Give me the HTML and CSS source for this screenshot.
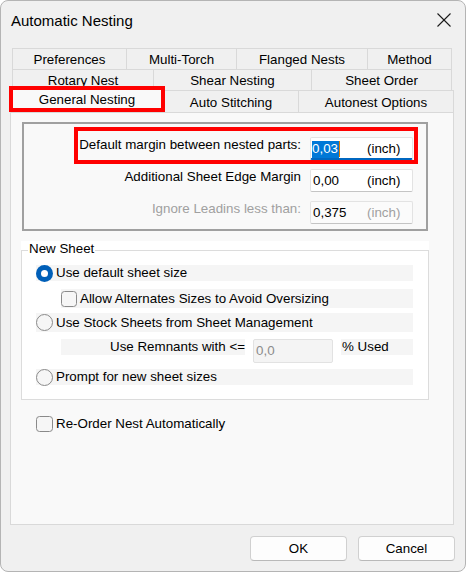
FILE: index.html
```html
<!DOCTYPE html>
<html lang="en">
<head>
    <meta charset="UTF-8">
    <title>Automatic Nesting</title>
    <link rel="stylesheet" href="styles.css">
</head>
<body>
    <div class="window">
        <!-- Title bar -->
        <div class="titlebar">
            <div class="title">Automatic Nesting</div>
            <svg class="close" viewBox="0 0 14 14">
                <line x1="0.5" y1="0.5" x2="13.5" y2="13.5" />
                <line x1="13.5" y1="0.5" x2="0.5" y2="13.5" />
            </svg>
        </div>

        <!-- Tabs -->
        <div class="tabs">
            <div class="tab-row">
                <div class="tab" style="width: 114px">Preferences</div>
                <div class="tab" style="width: 110px">Multi-Torch</div>
                <div class="tab" style="width: 131px">Flanged Nests</div>
                <div class="tab" style="width: 85px">Method</div>
            </div>
            <div class="tab-row">
                <div class="tab" style="width: 141px">Rotary Nest</div>
                <div class="tab" style="width: 158px">Shear Nesting</div>
                <div class="tab" style="width: 141px">Sheet Order</div>
            </div>
            <div class="tab-row front">
                <div class="tab selected" style="width: 153px">General Nesting</div>
                <div class="tab" style="width: 135px">Auto Stitching</div>
                <div class="tab" style="width: 156px">Autonest Options</div>
            </div>
        </div>
        <div class="mark tab-mark"></div>

        <!-- Tab page -->
        <div class="panel">
            <div class="margins">
                <div class="mark field-mark"></div>
                <div class="field-row">
                    <div class="field-label">Default margin between nested parts:</div>
                    <div class="edit focused">
                        <span class="val"><span class="sel">0,03</span><span class="caret"></span></span>
                        <span class="unit">(inch)</span>
                    </div>
                </div>
                <div class="field-row">
                    <div class="field-label">Additional Sheet Edge Margin</div>
                    <div class="edit">
                        <span class="val">0,00</span>
                        <span class="unit">(inch)</span>
                    </div>
                </div>
                <div class="field-row">
                    <div class="field-label muted">Ignore Leadins less than:</div>
                    <div class="edit disabled">
                        <span class="val">0,375</span>
                        <span class="unit muted">(inch)</span>
                    </div>
                </div>
            </div>

            <div class="sheet-group">
                <div class="legend">New Sheet</div>
                <div class="frame">
                    <div class="opt first">
                        <svg class="radio" viewBox="0 0 17 17">
                            <circle cx="8.5" cy="8.5" r="8.5" fill="#005fb8" />
                            <circle cx="8.5" cy="8.5" r="3.5" fill="#fff" />
                        </svg>
                        Use default sheet size
                    </div>
                    <div class="opt sub tall">
                        <svg class="check" viewBox="0 0 16 16">
                            <rect x="0.5" y="0.5" width="15" height="15" rx="3" />
                        </svg>
                        Allow Alternates Sizes to Avoid Oversizing
                    </div>
                    <div class="opt tall gap5">
                        <svg class="radio" viewBox="0 0 17 17">
                            <circle class="off" cx="8.5" cy="8.5" r="8" />
                        </svg>
                        Use Stock Sheets from Sheet Management
                    </div>
                    <div class="remnant-row">
                        <div class="remnant-label">Use Remnants with &lt;=</div>
                        <div class="remnant-edit">0,0</div>
                        <div class="remnant-unit">% Used</div>
                    </div>
                    <div class="opt gap6">
                        <svg class="radio" viewBox="0 0 17 17">
                            <circle class="off" cx="8.5" cy="8.5" r="8" />
                        </svg>
                        Prompt for new sheet sizes
                    </div>
                </div>
            </div>

            <div class="reorder">
                <svg class="check big" viewBox="0 0 17 16">
                    <rect x="0.5" y="0.5" width="16" height="15" rx="3" />
                </svg>
                Re-Order Nest Automatically
            </div>
        </div>

        <!-- Buttons -->
        <div class="footer">
            <button class="btn">OK</button>
            <button class="btn">Cancel</button>
        </div>
    </div>
</body>
</html>
```

FILE: styles.css
```css
* {
    box-sizing: border-box;
}

body {
    margin: 0;
    background: #fff;
    font-family: "Liberation Sans", Arial, sans-serif;
    font-size: 13.35px;
    color: #000;
}

.window {
    position: relative;
    width: 466px;
    height: 572px;
    border: 1px solid #b4b4b4;
    border-radius: 8px;
    background: #f0f0f0;
    overflow: hidden;
}

.titlebar {
    height: 47px;
    display: flex;
    justify-content: space-between;
    align-items: flex-start;
    padding: 11px 0 0 10px;
}

.title {
    font-size: 15px;
    line-height: 18px;
}

.close {
    width: 14px;
    height: 14px;
    margin: 1px 14px 0 0;
    stroke: #1a1a1a;
    stroke-width: 1.1;
}

/* tabs */
.tabs {
    margin-left: 11px;
}

.tab-row {
    display: flex;
    height: 21px;
}

.tab-row.front {
    height: 22px;
    margin-left: -2px;
}

.tab {
    height: 100%;
    border: 1px solid #d9d9d9;
    border-right: none;
    border-bottom: none;
    padding-top: 1px;
    line-height: 19px;
    text-align: center;
    white-space: nowrap;
}

.tab:last-child {
    border-right: 1px solid #d9d9d9;
}

.front .tab {
    padding-top: 2px;
}

.tab.selected {
    height: 25px;
    margin-top: -3px;
    background: #f9f9f9;
}

.mark {
    position: absolute;
    border: 4px solid #f00;
}

.tab-mark {
    left: 8px;
    top: 85px;
    width: 156px;
    height: 26px;
}

/* page */
.panel {
    margin-left: 9px;
    width: 444px;
    height: 413px;
    background: #f9f9f9;
    border: 1px solid #d9d9d9;
}

.margins {
    position: relative;
    margin: 9px 0 0 11px;
    width: 406px;
    height: 109px;
    border: 2px solid #a0a0a0;
    padding: 13px 13px 0 0;
    display: flex;
    flex-direction: column;
    gap: 9px;
}

.field-mark {
    left: 50px;
    top: 3px;
    width: 344px;
    height: 37px;
}

.field-row {
    display: flex;
    justify-content: flex-end;
    align-items: flex-start;
    gap: 9px;
    height: 23px;
}

.field-label {
    line-height: 16px;
    white-space: nowrap;
}

.muted {
    color: #a0a0a0;
}

.edit {
    display: flex;
    width: 103px;
    height: 23px;
    padding: 3px 2px 0;
    line-height: 16px;
    background: #fff;
    border: 1px solid #e3e3e3;
    border-bottom-color: #c4c4c4;
    border-radius: 2px;
}

.edit.focused {
    border-bottom: 2px solid #0067c0;
}

.edit.disabled {
    background: #fbfbfb;
}

.val {
    width: 54px;
    display: flex;
}

.sel {
    background: #0078d7;
    color: #fff;
    padding: 0 1px 0 0;
    margin-left: -1px;
}

.caret {
    width: 1px;
    height: 16px;
    background: #e07a00;
}

/* new sheet group */
.sheet-group {
    position: relative;
    margin: 10px 0 0 10px;
    width: 408px;
    padding-top: 9px;
    background: #fff;
}

.legend {
    position: absolute;
    left: 7px;
    top: 0;
    padding: 0 1px;
    line-height: 16px;
    background: #fff;
}

.frame {
    height: 150px;
    border: 1px solid #dcdcdc;
    padding: 14px 0 0 14px;
}

.opt {
    display: flex;
    align-items: center;
    gap: 3px;
    width: 377px;
    height: 16px;
    line-height: 16px;
    white-space: nowrap;
    background: #f5f5f5;
}

.opt.tall {
    height: 19px;
}

.opt.sub {
    width: 352px;
    margin: 8px 0 0 25px;
}

.opt.gap5 {
    margin-top: 5px;
}

.opt.gap6 {
    margin-top: 6px;
}

.radio {
    width: 17px;
    height: 17px;
    flex: none;
}

.radio .off {
    fill: #f6f6f6;
    stroke: #8a8a8a;
    stroke-width: 1;
}

.check {
    width: 16px;
    height: 16px;
    flex: none;
    fill: #f6f6f6;
    stroke: #8a8a8a;
    stroke-width: 1;
}

.check.big {
    width: 17px;
}

.remnant-row {
    display: flex;
    align-items: flex-start;
    gap: 8px;
    height: 24px;
    margin: 7px 0 0 25px;
}

.remnant-label {
    width: 184px;
    height: 16px;
    line-height: 16px;
    text-align: right;
    background: #f5f5f5;
}

.remnant-edit {
    width: 80px;
    height: 24px;
    padding: 3px 2px 0;
    line-height: 16px;
    color: #8c8c8c;
    background: #f4f4f4;
    border: 1px solid #e2e2e2;
    border-radius: 2px;
}

.remnant-unit {
    width: 72px;
    height: 16px;
    line-height: 16px;
    padding-left: 1px;
    background: #f5f5f5;
}

.reorder {
    display: flex;
    align-items: center;
    gap: 3px;
    height: 17px;
    line-height: 16px;
    margin: 15px 0 0 25px;
}

/* buttons */
.footer {
    display: flex;
    justify-content: flex-end;
    gap: 11px;
    padding: 11px 10px 0 0;
}

.btn {
    width: 97px;
    height: 25px;
    font: inherit;
    color: #000;
    background: #fdfdfd;
    border: 1px solid #d0d0d0;
    border-bottom-color: #b9b9b9;
    border-radius: 4px;
}
```
